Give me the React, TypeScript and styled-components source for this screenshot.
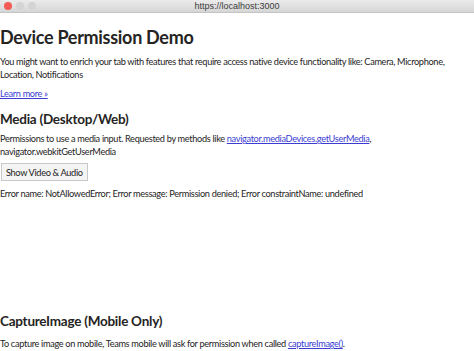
import React from "react";
import styled, { createGlobalStyle } from "styled-components";

const Global = createGlobalStyle`
  html, body { margin: 0; padding: 0; background: #fff; }
  body { font-family: Lato, "Open Sans", sans-serif; color: #252423; }
`;

const Window = styled.div`
  width: 474px;
  height: 351px;
  overflow: hidden;
  display: flex;
  flex-direction: column;
`;

const TitleBar = styled.div`
  height: 12px;
  flex: none;
  background: linear-gradient(#ebebeb, #d6d6d6);
  border-bottom: 1px solid #c4c4c4;
  display: flex;
  align-items: center;
  position: relative;
  padding-left: 4px;
  gap: 4px;
`;

const Light = styled.span<{ $c: string }>`
  width: 8px;
  height: 8px;
  border-radius: 50%;
  background: ${(p) => p.$c};
`;

const Url = styled.div`
  position: absolute;
  left: 0;
  right: 0;
  top: 0;
  height: 12px;
  line-height: 12px;
  text-align: center;
  font-family: "Liberation Sans", sans-serif;
  font-size: 9px;
  color: #3c3c3c;
`;

const Content = styled.div`
  display: flex;
  flex-direction: column;
  align-items: flex-start;
`;

const H1 = styled.h1`
  font-size: 18px;
  font-weight: 700;
  margin: 13px 0 0 0;
  line-height: 22px;
  letter-spacing: -0.3px;
`;

const H2 = styled.h2<{ $top: number }>`
  font-size: 13.5px;
  font-weight: 700;
  margin: ${(p) => p.$top}px 0 0 0;
  line-height: 18px;
  letter-spacing: -0.25px;
`;

const P = styled.p<{ $top: number }>`
  font-size: 9.2px;
  line-height: 13px;
  margin: ${(p) => p.$top}px 0 0 0;
  white-space: nowrap;
  letter-spacing: -0.33px;
`;

const Link = styled.a`
  color: #3b3dd2;
  text-decoration: underline;
`;

const Button = styled.button`
  margin: 5px 0 0 1px;
  height: 18px;
  padding: 0 4px;
  font-family: inherit;
  font-size: 9.2px;
  letter-spacing: -0.33px;
  color: #222;
  background: #f4f4f4;
  border: 1px solid #c8c8c8;
  border-radius: 0;
  display: block;
`;

export default function App() {
  return (
    <Window>
      <Global />
      <TitleBar>
        <Light $c="#f25c55" />
        <Light $c="#d4d4d4" />
        <Light $c="#d4d4d4" />
        <Url>https://localhost:3000</Url>
      </TitleBar>
      <Content>
        <H1>Device Permission Demo</H1>
        <P $top={7}>
          You might want to enrich your tab with features that require access native device functionality like: Camera, Microphone,
          <br />
          Location, Notifications
        </P>
        <P $top={6}>
          <Link href="#">Learn more »</Link>
        </P>
        <H2 $top={10}>Media (Desktop/Web)</H2>
        <P $top={4}>
          Permissions to use a media input. Requested by methods like{" "}
          <Link href="#">navigator.mediaDevices.getUserMedia</Link>,
          <br />
          navigator.webkitGetUserMedia
        </P>
        <Button>Show Video &amp; Audio</Button>
        <P $top={6}>Error name: NotAllowedError; Error message: Permission denied; Error constraintName: undefined</P>
        <H2 $top={112}>CaptureImage (Mobile Only)</H2>
        <P $top={7}>
          To capture image on mobile, Teams mobile will ask for permission when called{" "}
          <Link href="#">captureImage()</Link>.
        </P>
      </Content>
    </Window>
  );
}
